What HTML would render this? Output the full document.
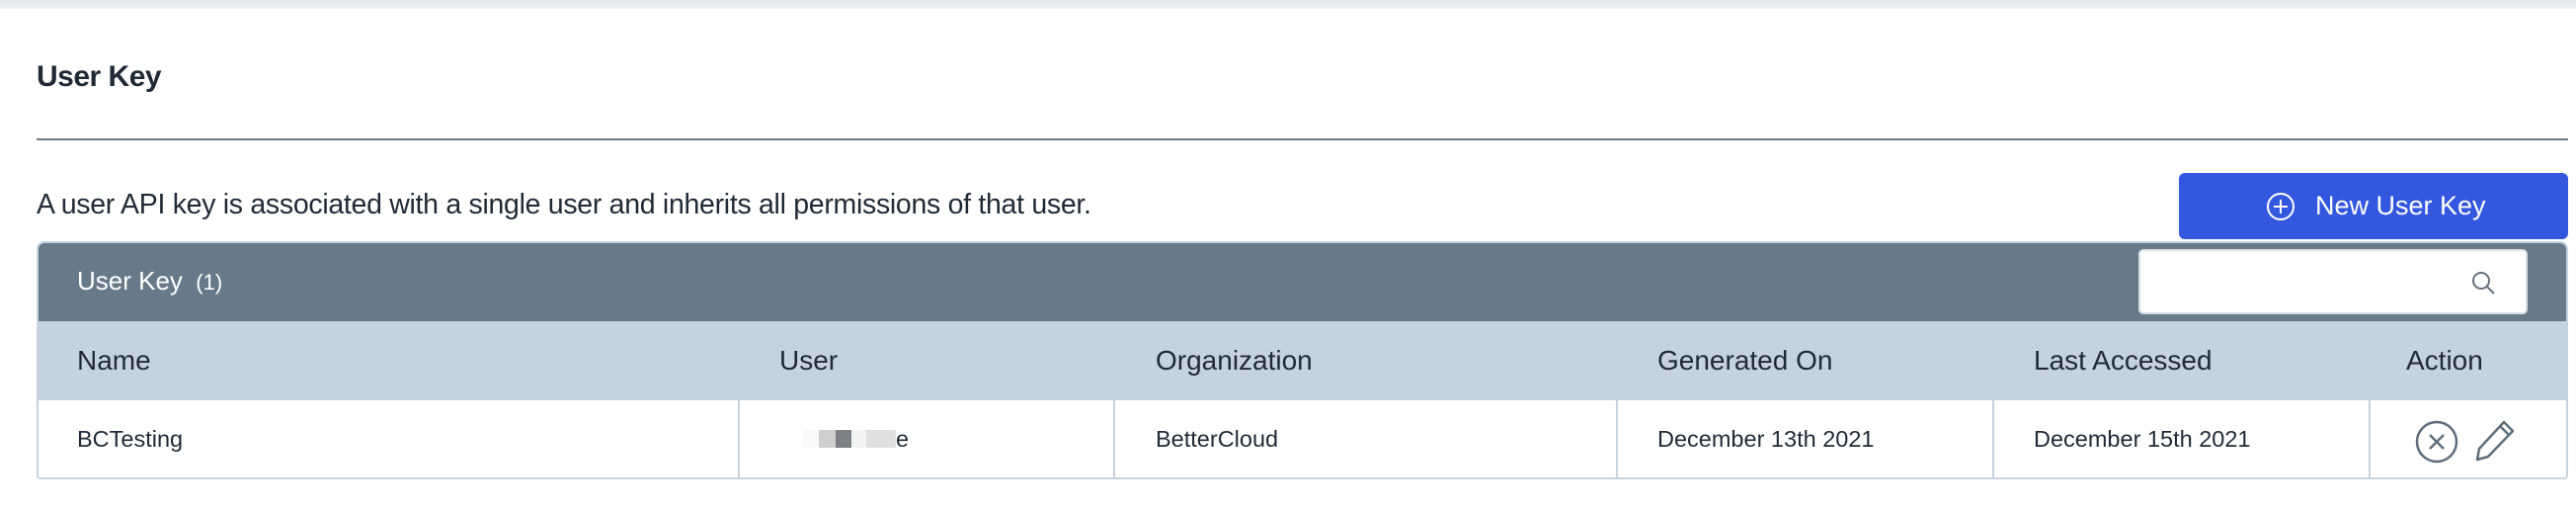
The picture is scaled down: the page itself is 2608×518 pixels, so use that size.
<!DOCTYPE html>
<html><head><meta charset="utf-8"><style>
*{margin:0;padding:0;box-sizing:border-box}
body{width:2608px;height:518px;background:#fff;font-family:"Liberation Sans",sans-serif;color:#1f2a36;position:relative;overflow:hidden}
.top{position:absolute;left:0;top:0;width:2608px;height:9px;background:linear-gradient(#e3e8ec,#eef1f4)}
.abs{position:absolute;white-space:nowrap}
.title{left:37px;top:61px;font-size:30px;font-weight:bold;letter-spacing:-0.5px}
.hr{position:absolute;left:37px;top:140px;width:2563px;height:2px;background:#6b7a88}
.desc{left:37px;top:191px;font-size:28.5px;letter-spacing:-0.3px}
.btn{position:absolute;left:2206px;top:175px;width:394px;height:67px;background:#3457e0;border-radius:6px;color:#fff;font-size:27px}
.table{position:absolute;left:37px;top:244px;width:2563px;height:241px;border:2px solid #c6d3de;border-radius:8px 8px 4px 4px;overflow:hidden}
.band{position:absolute;left:0;top:0;width:100%;height:79px;background:#687a89}
.ch{position:absolute;left:0;top:79px;width:100%;height:80px;background:#c5d3de}
.vl{position:absolute;top:159px;width:2px;height:80px;background:#c6d3de}
.search{position:absolute;left:2126px;top:6px;width:394px;height:66px;background:#fff;border:2px solid #d7dee4;border-radius:5px}
.h{font-size:28px;top:103px}
.d{font-size:23.5px;top:185px}
</style></head><body>
<div class="top"></div>
<div class="abs title">User Key</div>
<div class="hr"></div>
<div class="abs desc">A user API key is associated with a single user and inherits all permissions of that user.</div>
<div class="btn">
<svg style="position:absolute;left:88px;top:19px" width="30" height="30" viewBox="0 0 30 30"><circle cx="15" cy="15" r="13" fill="none" stroke="#fff" stroke-width="2"/><path d="M15 8v14M8 15h14" stroke="#fff" stroke-width="2"/></svg>
<span class="abs" style="left:138px;top:18px">New User Key</span>
</div>
<div class="table">
<div class="band"></div>
<div class="abs" style="left:39px;top:23px;color:#fff;font-size:26px">User Key <span style="font-size:22px">&nbsp;(1)</span></div>
<div class="search"><svg style="position:absolute;left:333px;top:18px" width="30" height="30" viewBox="0 0 30 30"><circle cx="12" cy="12" r="8" fill="none" stroke="#68737d" stroke-width="2"/><path d="M18 18l7 7" stroke="#68737d" stroke-width="2"/></svg></div>
<div class="ch"></div>
<div class="vl" style="left:708px"></div>
<div class="vl" style="left:1088px"></div>
<div class="vl" style="left:1597px"></div>
<div class="vl" style="left:1978px"></div>
<div class="vl" style="left:2359px"></div>
<div class="abs h" style="left:39px">Name</div>
<div class="abs h" style="left:750px">User</div>
<div class="abs h" style="left:1131px">Organization</div>
<div class="abs h" style="left:1639px">Generated On</div>
<div class="abs h" style="left:2020px">Last Accessed</div>
<div class="abs h" style="left:2397px">Action</div>
<div class="abs d" style="left:39px">BCTesting</div>
<div class="abs" style="left:774px;top:189px;width:94px;height:18px;background:linear-gradient(90deg,#fafafa 0 17%,#cfcfd0 17% 35%,#7d8084 35% 52%,#f3f4f4 52% 68%,#e0e0e0 68% 100%)"></div>
<div class="abs d" style="left:868px">e</div>
<div class="abs d" style="left:1131px">BetterCloud</div>
<div class="abs d" style="left:1639px">December 13th 2021</div>
<div class="abs d" style="left:2020px">December 15th 2021</div>
<svg style="position:absolute;left:2404px;top:177px" width="48" height="48" viewBox="0 0 48 48"><circle cx="24" cy="24" r="20" fill="none" stroke="#5f6f7d" stroke-width="2.5"/><path d="M17 17l14 14M31 17L17 31" stroke="#5f6f7d" stroke-width="2.5"/></svg>
<svg style="position:absolute;left:2464px;top:175px" width="48" height="48" viewBox="0 0 48 48"><path d="M5 44l2-11L32 6l9 9-25 26z M28 10l9 9" fill="none" stroke="#5f6f7d" stroke-width="2.5" stroke-linejoin="round"/></svg>
</div>
</body></html>
